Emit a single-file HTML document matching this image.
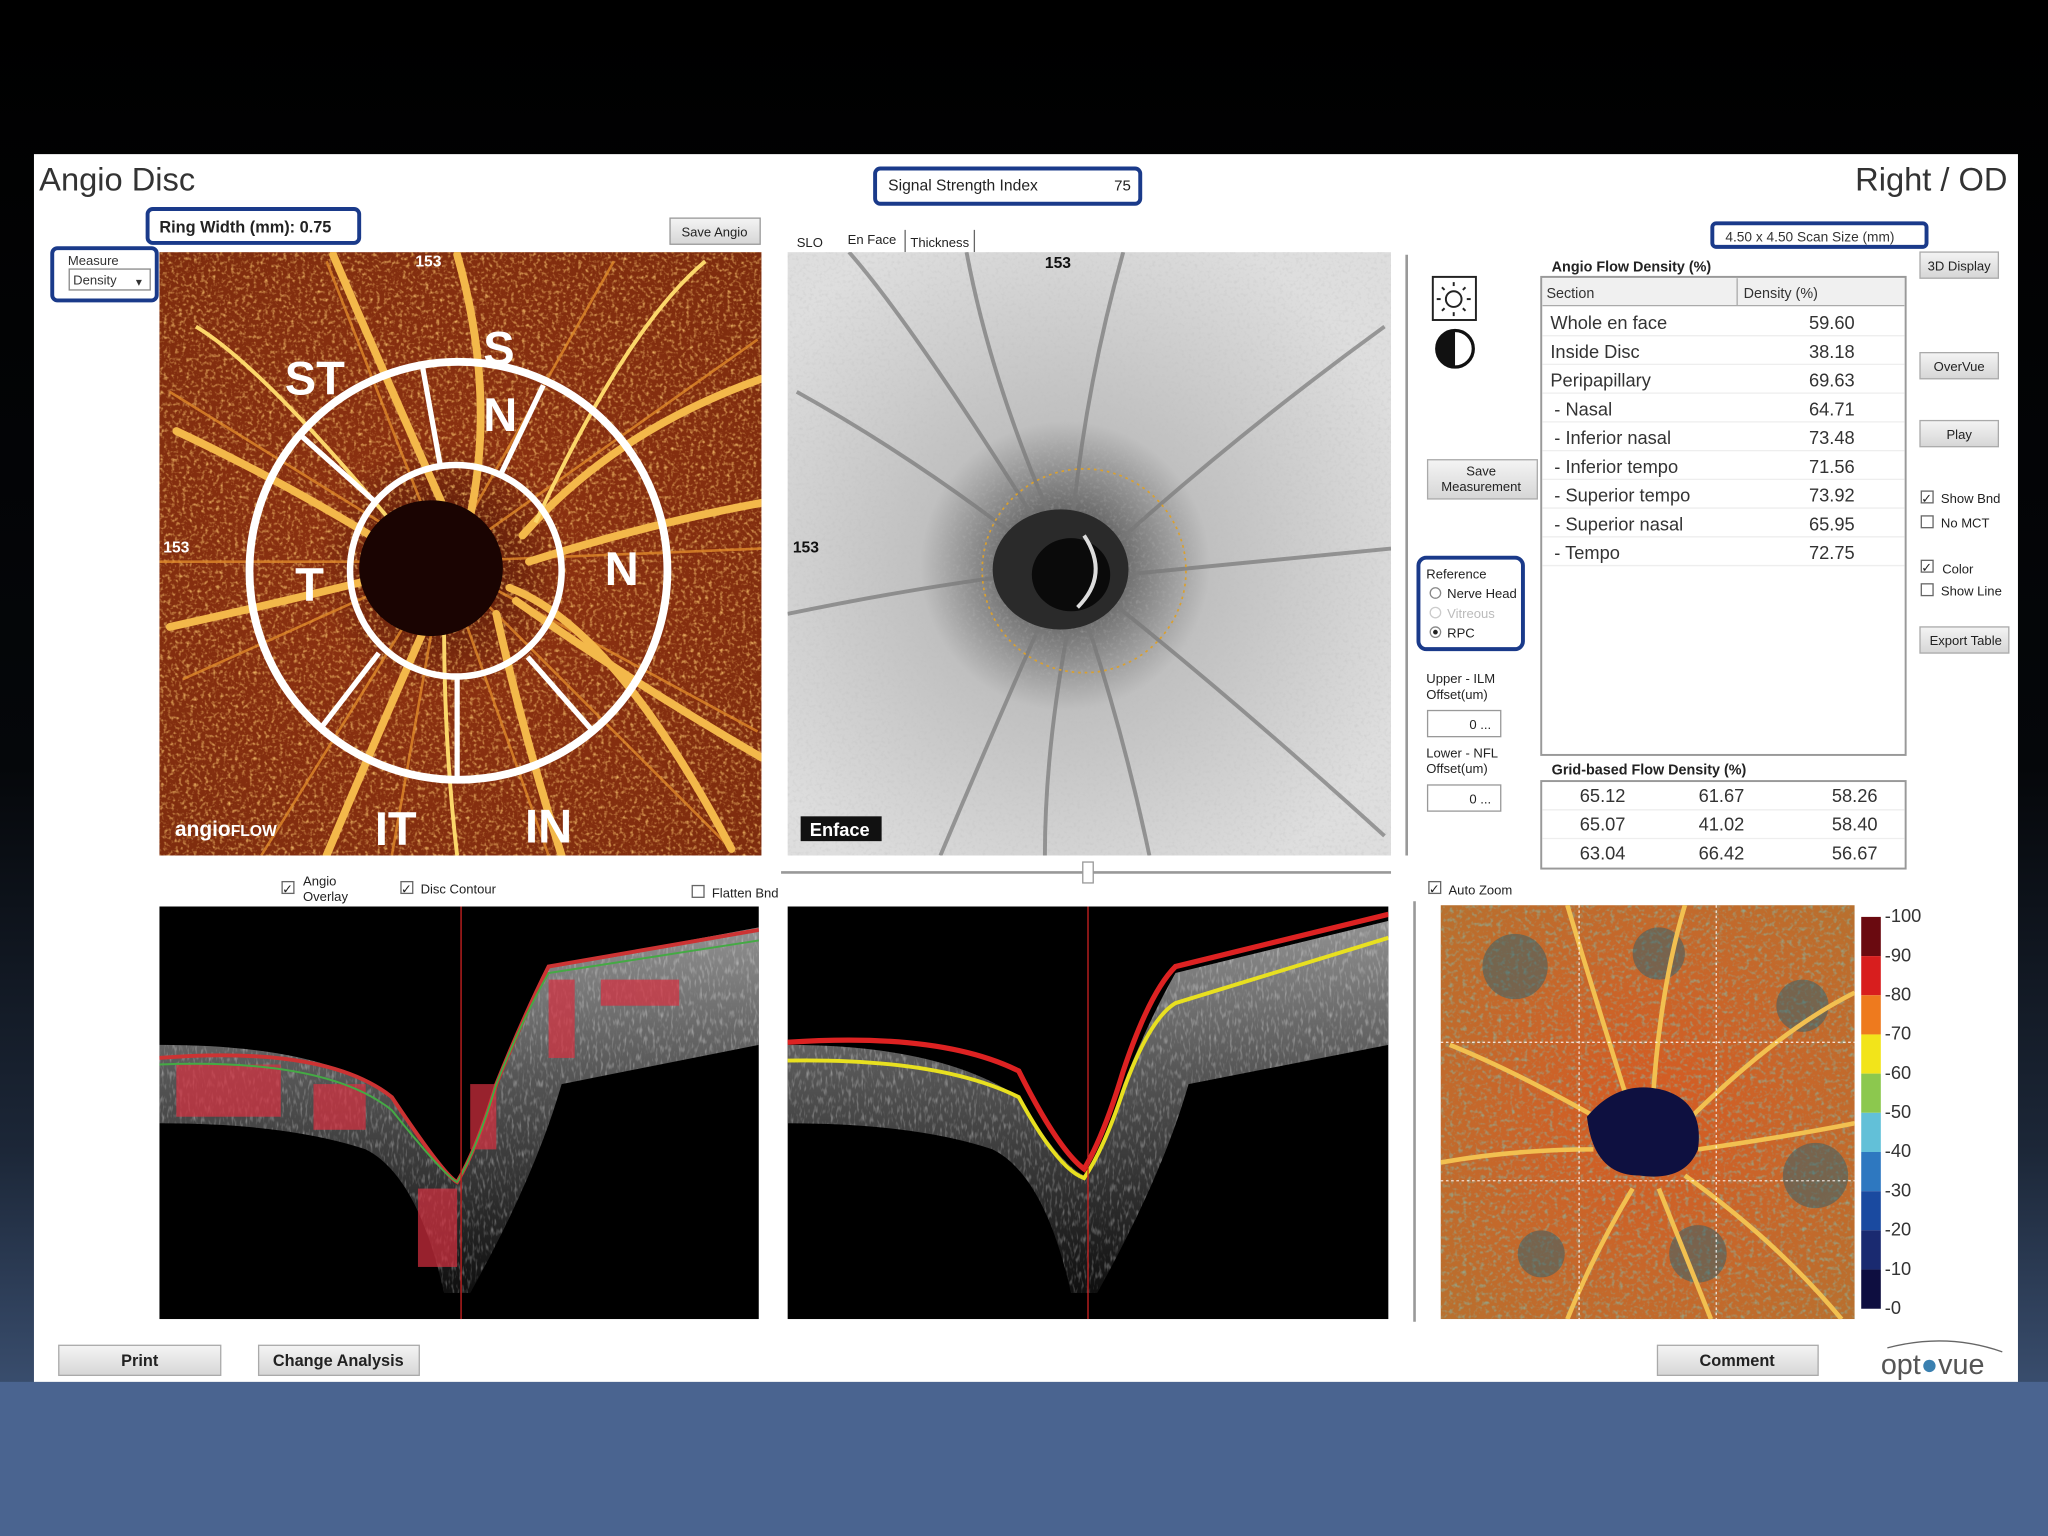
<!DOCTYPE html>
<html><head><meta charset="utf-8"><style>
html,body{margin:0;padding:0;background:#000;}
svg{display:block;}
text{font-family:"Liberation Sans",sans-serif;}
</style></head><body>
<svg width="2048" height="1536" viewBox="0 0 1568 1176" xmlns="http://www.w3.org/2000/svg">
<defs>
<linearGradient id="bg" x1="0" y1="0" x2="0" y2="1">
<stop offset="0" stop-color="#000"/><stop offset="0.5" stop-color="#05070a"/><stop offset="0.75" stop-color="#1c2738"/><stop offset="1" stop-color="#4c6690"/></linearGradient>
<radialGradient id="angbg" cx="0.47" cy="0.52" r="0.7"><stop offset="0" stop-color="#4a1406"/><stop offset="0.3" stop-color="#8a3010"/><stop offset="1" stop-color="#7e2c0e"/></radialGradient>
<radialGradient id="enbg" cx="0.46" cy="0.52" r="0.6"><stop offset="0" stop-color="#303030"/><stop offset="0.2" stop-color="#7a7a7a"/><stop offset="0.4" stop-color="#c0c0c0"/><stop offset="1" stop-color="#dedede"/></radialGradient>
<radialGradient id="cmbg" cx="0.5" cy="0.5" r="0.7"><stop offset="0" stop-color="#d65a22"/><stop offset="0.5" stop-color="#c8662a"/><stop offset="1" stop-color="#b8702e"/></radialGradient>
<linearGradient id="octg" x1="0" y1="0" x2="0" y2="1"><stop offset="0" stop-color="#aaa"/><stop offset="0.4" stop-color="#666"/><stop offset="1" stop-color="#111"/></linearGradient>
<linearGradient id="btn" x1="0" y1="0" x2="0" y2="1"><stop offset="0" stop-color="#f4f4f4"/><stop offset="1" stop-color="#d6d6d6"/></linearGradient>
<filter id="nOr" x="0" y="0" width="1" height="1"><feTurbulence type="fractalNoise" baseFrequency="0.35" numOctaves="2" seed="3"/><feColorMatrix values="0 0 0 0 0.95  0 0 0 0 0.55  0 0 0 0 0.15  2.2 0 0 0 -1.1"/></filter>
<filter id="nGr" x="0" y="0" width="1" height="1"><feTurbulence type="fractalNoise" baseFrequency="0.4" numOctaves="2" seed="7"/><feColorMatrix values="0 0 0 0 0.5  0 0 0 0 0.5  0 0 0 0 0.5  1.6 0 0 0 -0.8"/></filter>
<filter id="nCm" x="0" y="0" width="1" height="1"><feTurbulence type="fractalNoise" baseFrequency="0.3" numOctaves="2" seed="11"/><feColorMatrix values="0 0 0 0 0.25  0 0 0 0 0.45  0 0 0 0 0.35  2 0 0 0 -1"/></filter>
<filter id="nWh" x="0" y="0" width="1" height="1"><feTurbulence type="fractalNoise" baseFrequency="0.5 0.15" numOctaves="2" seed="5"/><feColorMatrix values="0 0 0 0 1  0 0 0 0 1  0 0 0 0 1  1.8 0 0 0 -0.9"/></filter>
<clipPath id="c1"><rect x="122" y="193" width="461" height="462"/></clipPath>
<clipPath id="c2"><rect x="603" y="193" width="462" height="462"/></clipPath>
<clipPath id="c3"><rect x="1103" y="693" width="317" height="317"/></clipPath>
<clipPath id="c4"><rect x="122" y="694" width="459" height="316"/></clipPath>
<clipPath id="c5"><rect x="603" y="694" width="460" height="316"/></clipPath>
<clipPath id="b4"><path d="M122 800 Q250 800 300 840 Q340 900 350 905 Q365 880 380 830 Q400 780 420 740 L581 710 L581 800 L430 830 Q410 900 360 990 L340 990 Q320 900 280 880 Q220 860 122 860 Z"/></clipPath>
<clipPath id="b5"><path d="M603 800 Q720 800 780 840 Q810 890 830 900 Q845 880 860 830 Q880 780 900 745 L1063 705 L1063 800 L910 830 Q890 900 840 990 L820 990 Q800 900 760 880 Q700 860 603 860 Z"/></clipPath>
</defs>
<rect width="1568" height="1176" fill="url(#bg)"/>
<rect x="0" y="1058" width="1568" height="118" fill="#4a6490"/>
<rect x="26" y="118" width="1519" height="940" fill="#fff"/>

<text x="30" y="146" font-size="25" fill="#333">Angio Disc</text>
<text x="1537" y="146" font-size="25" fill="#333" text-anchor="end">Right / OD</text>
<rect x="670" y="129" width="203" height="27" rx="4" fill="#fff" stroke="#1a3a8a" stroke-width="3"/>
<text x="680" y="146" font-size="12" fill="#222">Signal Strength Index</text>
<text x="853" y="146" font-size="11.5" fill="#222">75</text>
<rect x="113" y="160" width="162" height="26" rx="4" fill="#fff" stroke="#1a3a8a" stroke-width="3"/>
<text x="122" y="178" font-size="12.5" font-weight="bold" fill="#222">Ring Width (mm): 0.75</text>
<rect x="1311" y="171" width="164" height="18" rx="3" fill="#fff" stroke="#1a3a8a" stroke-width="3"/>
<text x="1321" y="185" font-size="10.5" fill="#333">4.50 x 4.50 Scan Size (mm)</text>
<rect x="40" y="190" width="80" height="40" rx="4" fill="#fff" stroke="#1a3a8a" stroke-width="3"/>
<text x="52" y="203" font-size="10" fill="#333">Measure</text>
<rect x="53" y="206" width="62" height="16" fill="#fff" stroke="#888"/>
<text x="56" y="218" font-size="10" fill="#333">Density</text>
<text x="104" y="219" font-size="9" fill="#333">▾</text>
<rect x="513" y="167" width="69" height="20" fill="url(#btn)" stroke="#999"/>
<text x="547" y="181" font-size="10" fill="#222" text-anchor="middle">Save Angio</text>
<text x="610" y="189" font-size="10" fill="#222">SLO</text>
<text x="649" y="187" font-size="10" fill="#222">En Face</text>
<line x1="693" y1="176" x2="693" y2="193" stroke="#666"/>
<text x="697" y="189" font-size="10" fill="#222">Thickness</text>
<line x1="746" y1="176" x2="746" y2="193" stroke="#666"/>

<!-- left angio -->
<g clip-path="url(#c1)">
<rect x="122" y="193" width="461" height="462" fill="url(#angbg)"/>
<rect x="122" y="193" width="461" height="462" filter="url(#nOr)"/>
<g stroke="#e08a2a" stroke-width="2" fill="none" opacity="0.8">
<path d="M340 430 L130 300 M340 430 L140 520 M340 430 L200 655 M340 430 L580 260 M340 430 L580 560 M340 430 L470 200 M340 430 L250 200 M340 430 L560 650 M340 430 L122 430 M340 430 L583 420 M340 430 L420 655 M340 430 L300 655"/>
</g>
<g stroke="#f3b84a" stroke-width="6" fill="none" stroke-linecap="round">
<path d="M345 400 Q300 300 255 195"/>
<path d="M360 395 Q380 300 350 195"/>
<path d="M400 410 Q470 330 583 290"/>
<path d="M405 430 Q500 400 583 385"/>
<path d="M395 460 Q480 520 583 580"/>
<path d="M380 470 Q400 560 430 655"/>
<path d="M330 470 Q290 560 250 655"/>
<path d="M300 440 Q220 460 130 480"/>
<path d="M300 420 Q220 370 135 330"/>
<path d="M390 450 Q470 480 560 650"/>
</g>
<g stroke="#fbd76a" stroke-width="3" fill="none">
<path d="M410 400 Q480 250 540 200"/><path d="M300 400 Q200 280 150 250"/><path d="M340 480 Q340 570 350 655"/>
</g>
<ellipse cx="330" cy="435" rx="55" ry="52" fill="#1a0402"/>
<circle cx="351" cy="437" r="160" fill="none" stroke="#fff" stroke-width="6"/>
<circle cx="349" cy="437" r="81" fill="none" stroke="#fff" stroke-width="5"/>
<g stroke="#fff" stroke-width="4">
<line x1="323" y1="278" x2="337" y2="356"/><line x1="416" y1="295" x2="383" y2="364"/>
<line x1="231" y1="334" x2="287" y2="384"/><line x1="246" y1="557" x2="290" y2="500"/>
<line x1="350" y1="597" x2="350" y2="518"/><line x1="455" y1="561" x2="404" y2="503"/>
</g>
<g fill="#fff" font-weight="bold" font-size="36">
<text x="218" y="302">ST</text><text x="370" y="279">S</text><text x="370" y="330">N</text>
<text x="226" y="460">T</text><text x="463" y="448">N</text><text x="287" y="647">IT</text><text x="402" y="645">IN</text>
</g>
<text x="318" y="204" font-size="12" fill="#fff" font-family="Liberation Mono,monospace" font-weight="bold">153</text>
<text x="125" y="423" font-size="12" fill="#fff" font-family="Liberation Mono,monospace" font-weight="bold">153</text>
<text x="134" y="640" font-size="16" fill="#fff" font-weight="bold">angio<tspan font-size="12">FLOW</tspan></text>
</g>

<!-- middle enface -->
<g clip-path="url(#c2)">
<rect x="603" y="193" width="462" height="462" fill="url(#enbg)"/>
<rect x="603" y="193" width="462" height="462" filter="url(#nGr)" opacity="0.5"/>
<g stroke="#777" stroke-width="3" fill="none" opacity="0.7">
<path d="M815 420 Q760 300 740 193"/><path d="M820 410 Q830 300 860 193"/><path d="M850 420 Q950 330 1060 250"/>
<path d="M860 440 Q960 430 1065 420"/><path d="M850 460 Q950 540 1060 640"/><path d="M830 470 Q860 560 880 655"/>
<path d="M800 470 Q760 560 720 655"/><path d="M780 440 Q700 450 603 470"/><path d="M790 420 Q700 350 610 300"/>
<path d="M800 410 Q700 250 650 193"/><path d="M820 470 Q800 570 800 655"/>
</g>
<ellipse cx="812" cy="436" rx="52" ry="46" fill="#2a2a2a"/>
<ellipse cx="820" cy="440" rx="30" ry="28" fill="#0a0a0a"/>
<path d="M830 410 Q850 440 825 465" stroke="#ddd" stroke-width="3" fill="none"/>
<circle cx="830" cy="437" r="78" fill="none" stroke="#d9a030" stroke-width="1.3" stroke-dasharray="2 3"/>
<text x="800" y="205" font-size="12" fill="#111" font-family="Liberation Mono,monospace" font-weight="bold">153</text>
<text x="607" y="423" font-size="12" fill="#111" font-family="Liberation Mono,monospace" font-weight="bold">153</text>
<rect x="613" y="625" width="62" height="19" fill="#111"/>
<text x="620" y="640" font-size="14" fill="#fff" font-weight="bold">Enface</text>
</g>
<line x1="598" y1="668" x2="1065" y2="668" stroke="#999" stroke-width="2"/>
<rect x="829" y="660" width="8" height="16" fill="#fff" stroke="#999"/>
<line x1="1077" y1="195" x2="1077" y2="655" stroke="#999" stroke-width="2"/>
<line x1="1083" y1="690" x2="1083" y2="1012" stroke="#999" stroke-width="2"/>

<rect x="1097" y="212" width="33" height="33" fill="#fff" stroke="#222" stroke-width="1.5"/>
<circle cx="1113" cy="229" r="6" fill="none" stroke="#222" stroke-width="1.5"/>
<g stroke="#222" stroke-width="1.5"><line x1="1113" y1="216" x2="1113" y2="219"/><line x1="1113" y1="239" x2="1113" y2="242"/><line x1="1100" y1="229" x2="1103" y2="229"/><line x1="1123" y1="229" x2="1126" y2="229"/><line x1="1104" y1="220" x2="1106" y2="222"/><line x1="1120" y1="236" x2="1122" y2="238"/><line x1="1122" y1="220" x2="1120" y2="222"/><line x1="1104" y1="238" x2="1106" y2="236"/></g>
<circle cx="1114" cy="267" r="14" fill="#fff" stroke="#111" stroke-width="2.5"/>
<path d="M1114 253 A14 14 0 0 0 1114 281 Z" fill="#111"/>
<rect x="1093" y="352" width="84" height="30" fill="url(#btn)" stroke="#aaa"/>
<text x="1134" y="364" font-size="10" fill="#222" text-anchor="middle">Save</text>
<text x="1134" y="376" font-size="10" fill="#222" text-anchor="middle">Measurement</text>
<rect x="1086" y="427" width="80" height="70" rx="6" fill="#fff" stroke="#1a3a8a" stroke-width="3"/>
<text x="1092" y="443" font-size="10" fill="#222">Reference</text>
<circle cx="1099" cy="454" r="4" fill="none" stroke="#888"/><text x="1108" y="458" font-size="10" fill="#222">Nerve Head</text>
<circle cx="1099" cy="469" r="4" fill="none" stroke="#ccc"/><text x="1108" y="473" font-size="10" fill="#bbb">Vitreous</text>
<circle cx="1099" cy="484" r="4" fill="none" stroke="#888"/><circle cx="1099" cy="484" r="1.8" fill="#222"/><text x="1108" y="488" font-size="10" fill="#222">RPC</text>
<text x="1092" y="523" font-size="10" fill="#222">Upper - ILM</text>
<text x="1092" y="535" font-size="10" fill="#222">Offset(um)</text>
<rect x="1093" y="544" width="56" height="20" fill="#fff" stroke="#999"/>
<text x="1125" y="558" font-size="10" fill="#222">0 ...</text>
<text x="1092" y="580" font-size="10" fill="#222">Lower - NFL</text>
<text x="1092" y="592" font-size="10" fill="#222">Offset(um)</text>
<rect x="1093" y="601" width="56" height="20" fill="#fff" stroke="#999"/>
<text x="1125" y="615" font-size="10" fill="#222">0 ...</text>

<text x="1188" y="208" font-size="11" font-weight="bold" fill="#222">Angio Flow Density (%)</text>
<rect x="1180" y="212" width="279" height="366" fill="#fff" stroke="#999" stroke-width="1.5"/>
<rect x="1181" y="213" width="277" height="21" fill="#f0f0f0"/>
<line x1="1181" y1="234" x2="1458" y2="234" stroke="#aaa"/>
<line x1="1330" y1="213" x2="1330" y2="234" stroke="#aaa"/>
<text x="1184" y="228" font-size="11" fill="#333">Section</text>
<text x="1335" y="228" font-size="11" fill="#333">Density (%)</text>
<g font-size="14" fill="#333">
<text x="1187" y="252">Whole en face</text><text x="1420" y="252" text-anchor="end">59.60</text>
<text x="1187" y="274">Inside Disc</text><text x="1420" y="274" text-anchor="end">38.18</text>
<text x="1187" y="296">Peripapillary</text><text x="1420" y="296" text-anchor="end">69.63</text>
<text x="1190" y="318">- Nasal</text><text x="1420" y="318" text-anchor="end">64.71</text>
<text x="1190" y="340">- Inferior nasal</text><text x="1420" y="340" text-anchor="end">73.48</text>
<text x="1190" y="362">- Inferior tempo</text><text x="1420" y="362" text-anchor="end">71.56</text>
<text x="1190" y="384">- Superior tempo</text><text x="1420" y="384" text-anchor="end">73.92</text>
<text x="1190" y="406">- Superior nasal</text><text x="1420" y="406" text-anchor="end">65.95</text>
<text x="1190" y="428">- Tempo</text><text x="1420" y="428" text-anchor="end">72.75</text>
</g>
<g stroke="#eee"><line x1="1181" y1="257" x2="1458" y2="257"/><line x1="1181" y1="279" x2="1458" y2="279"/><line x1="1181" y1="301" x2="1458" y2="301"/><line x1="1181" y1="323" x2="1458" y2="323"/><line x1="1181" y1="345" x2="1458" y2="345"/><line x1="1181" y1="367" x2="1458" y2="367"/><line x1="1181" y1="389" x2="1458" y2="389"/><line x1="1181" y1="411" x2="1458" y2="411"/><line x1="1181" y1="433" x2="1458" y2="433"/></g>
<text x="1188" y="593" font-size="11" font-weight="bold" fill="#222">Grid-based Flow Density (%)</text>
<rect x="1180" y="598" width="279" height="67" fill="#fff" stroke="#999" stroke-width="1.5"/>
<g font-size="14" fill="#333" text-anchor="middle">
<text x="1227" y="614">65.12</text><text x="1318" y="614">61.67</text><text x="1420" y="614">58.26</text>
<text x="1227" y="636">65.07</text><text x="1318" y="636">41.02</text><text x="1420" y="636">58.40</text>
<text x="1227" y="658">63.04</text><text x="1318" y="658">66.42</text><text x="1420" y="658">56.67</text>
</g>
<g stroke="#eee"><line x1="1181" y1="620" x2="1458" y2="620"/><line x1="1181" y1="642" x2="1458" y2="642"/></g>

<g font-size="10" fill="#222" text-anchor="middle">
<rect x="1470" y="193" width="60" height="20" fill="url(#btn)" stroke="#aaa"/><text x="1500" y="207">3D Display</text>
<rect x="1470" y="270" width="60" height="20" fill="url(#btn)" stroke="#aaa"/><text x="1500" y="284">OverVue</text>
<rect x="1470" y="322" width="60" height="20" fill="url(#btn)" stroke="#aaa"/><text x="1500" y="336">Play</text>
<rect x="1470" y="480" width="68" height="20" fill="url(#btn)" stroke="#aaa"/><text x="1505" y="494">Export Table</text>
</g>
<g font-size="10" fill="#222">
<rect x="1471" y="376" width="9" height="9" fill="#fff" stroke="#666"/><text x="1471" y="385">✓</text><text x="1486" y="385">Show Bnd</text>
<rect x="1471" y="395" width="9" height="9" fill="#fff" stroke="#666"/><text x="1486" y="404">No MCT</text>
<rect x="1471" y="429" width="9" height="9" fill="#fff" stroke="#666"/><text x="1471" y="438">✓</text><text x="1487" y="439">Color</text>
<rect x="1471" y="447" width="9" height="9" fill="#fff" stroke="#666"/><text x="1486" y="456">Show Line</text>
</g>

<g font-size="10" fill="#222">
<rect x="216" y="675" width="9" height="9" fill="#fff" stroke="#666"/><text x="216" y="684">✓</text><text x="232" y="678">Angio</text><text x="232" y="690">Overlay</text>
<rect x="307" y="675" width="9" height="9" fill="#fff" stroke="#666"/><text x="307" y="684">✓</text><text x="322" y="684">Disc Contour</text>
<rect x="530" y="678" width="9" height="9" fill="#fff" stroke="#666"/><text x="545" y="687">Flatten Bnd</text>
<rect x="1094" y="675" width="9" height="9" fill="#fff" stroke="#666"/><text x="1094" y="684">✓</text><text x="1109" y="685">Auto Zoom</text>
</g>

<!-- OCT left -->
<g clip-path="url(#c4)">
<rect x="122" y="694" width="459" height="316" fill="#000"/>
<path d="M122 800 Q250 800 300 840 Q340 900 350 905 Q365 880 380 830 Q400 780 420 740 L581 710 L581 800 L430 830 Q410 900 360 990 L340 990 Q320 900 280 880 Q220 860 122 860 Z" fill="url(#octg)" opacity="0.85"/>
<g clip-path="url(#b4)"><rect x="122" y="694" width="459" height="316" filter="url(#nWh)" opacity="0.5"/></g>
<path d="M122 810 Q250 800 300 840 Q340 900 350 905 Q365 880 380 830 Q400 780 420 740 L581 712" stroke="#c33" stroke-width="3" fill="none"/>
<g fill="#d83040" opacity="0.7"><rect x="135" y="815" width="80" height="40"/><rect x="240" y="830" width="40" height="35"/><rect x="360" y="830" width="20" height="50"/><rect x="420" y="750" width="20" height="60"/><rect x="320" y="910" width="30" height="60"/><rect x="460" y="750" width="60" height="20"/></g>
<path d="M122 815 Q250 810 300 850 Q340 900 350 905 Q365 880 380 830 Q400 780 420 745 L581 720" stroke="#4a4" stroke-width="1.5" fill="none"/>
<line x1="353" y1="694" x2="353" y2="1010" stroke="#c22" stroke-width="1"/>
</g>
<!-- OCT mid -->
<g clip-path="url(#c5)">
<rect x="603" y="694" width="460" height="316" fill="#000"/>
<path d="M603 800 Q720 800 780 840 Q810 890 830 900 Q845 880 860 830 Q880 780 900 745 L1063 705 L1063 800 L910 830 Q890 900 840 990 L820 990 Q800 900 760 880 Q700 860 603 860 Z" fill="url(#octg)" opacity="0.85"/>
<g clip-path="url(#b5)"><rect x="603" y="694" width="460" height="316" filter="url(#nWh)" opacity="0.5"/></g>
<path d="M603 798 Q720 790 780 820 Q810 880 830 895 Q845 870 860 820 Q880 760 900 740 L1063 700" stroke="#d22" stroke-width="4" fill="none"/>
<path d="M603 812 Q720 810 780 840 Q810 895 830 902 Q845 880 860 835 Q880 780 900 768 L1063 718" stroke="#e8e020" stroke-width="3" fill="none"/>
<line x1="833" y1="694" x2="833" y2="1010" stroke="#c22" stroke-width="1"/>
</g>

<!-- color map -->
<g clip-path="url(#c3)">
<rect x="1103" y="693" width="317" height="317" fill="url(#cmbg)"/>
<rect x="1103" y="693" width="317" height="317" filter="url(#nCm)"/>
<g fill="#2a6070" opacity="0.5"><circle cx="1160" cy="740" r="25"/><circle cx="1380" cy="770" r="20"/><circle cx="1390" cy="900" r="25"/><circle cx="1300" cy="960" r="22"/><circle cx="1180" cy="960" r="18"/><circle cx="1270" cy="730" r="20"/></g>
<g stroke="#f2c050" stroke-width="3.5" fill="none">
<path d="M1250 855 Q1220 760 1200 693"/><path d="M1265 850 Q1270 760 1290 693"/><path d="M1290 860 Q1360 790 1420 760"/>
<path d="M1300 880 Q1370 870 1420 860"/><path d="M1290 900 Q1360 950 1410 1010"/><path d="M1270 910 Q1290 960 1310 1010"/>
<path d="M1250 910 Q1220 960 1200 1010"/><path d="M1220 880 Q1160 880 1103 890"/><path d="M1230 860 Q1160 820 1110 800"/>
</g>
<path d="M1215 855 Q1240 825 1275 835 Q1305 845 1300 880 Q1290 905 1255 900 Q1220 900 1215 855 Z" fill="#0e1040"/>
<g stroke="#fff" stroke-width="1" stroke-dasharray="2 2" opacity="0.8"><line x1="1209" y1="693" x2="1209" y2="1010"/><line x1="1314" y1="693" x2="1314" y2="1010"/><line x1="1103" y1="798" x2="1420" y2="798"/><line x1="1103" y1="904" x2="1420" y2="904"/></g>
</g>
<g>
<rect x="1425" y="702" width="15" height="30" fill="#6a0a10"/><rect x="1425" y="732" width="15" height="30" fill="#d81e1e"/><rect x="1425" y="762" width="15" height="30" fill="#ee7a1e"/><rect x="1425" y="792" width="15" height="30" fill="#f2e41a"/><rect x="1425" y="822" width="15" height="30" fill="#8cc84e"/><rect x="1425" y="852" width="15" height="30" fill="#62c0d8"/><rect x="1425" y="882" width="15" height="30" fill="#2e78c0"/><rect x="1425" y="912" width="15" height="30" fill="#1a4aa0"/><rect x="1425" y="942" width="15" height="30" fill="#1a2a70"/><rect x="1425" y="972" width="15" height="30" fill="#0e0e40"/>
</g>
<g font-size="14" fill="#333">
<text x="1443" y="706">-100</text><text x="1443" y="736">-90</text><text x="1443" y="766">-80</text><text x="1443" y="796">-70</text><text x="1443" y="826">-60</text><text x="1443" y="856">-50</text><text x="1443" y="886">-40</text><text x="1443" y="916">-30</text><text x="1443" y="946">-20</text><text x="1443" y="976">-10</text><text x="1443" y="1006">-0</text>
</g>

<rect x="45" y="1030" width="124" height="23" fill="url(#btn)" stroke="#aaa"/><text x="107" y="1046" font-size="12.5" font-weight="bold" fill="#222" text-anchor="middle">Print</text>
<rect x="198" y="1030" width="123" height="23" fill="url(#btn)" stroke="#aaa"/><text x="259" y="1046" font-size="12.5" font-weight="bold" fill="#222" text-anchor="middle">Change Analysis</text>
<rect x="1269" y="1030" width="123" height="23" fill="url(#btn)" stroke="#aaa"/><text x="1330" y="1046" font-size="12.5" font-weight="bold" fill="#222" text-anchor="middle">Comment</text>
<path d="M1445 1032 Q1490 1020 1533 1035" stroke="#666" fill="none"/>
<text x="1440" y="1052" font-size="22" fill="#555">opt<tspan fill="#3a80b0">●</tspan>vue</text>
</svg>
</body></html>
